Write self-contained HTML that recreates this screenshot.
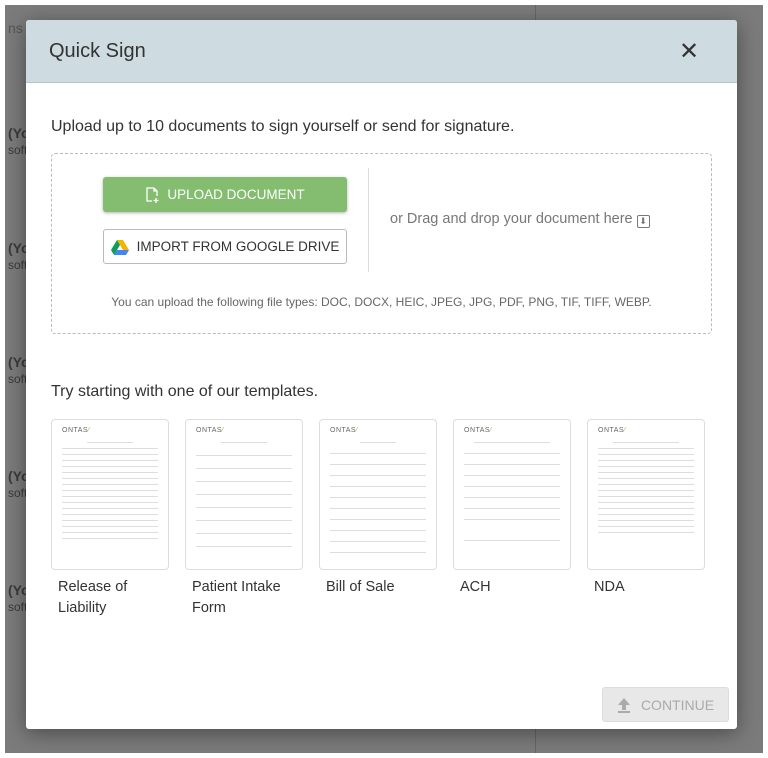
<!DOCTYPE html>
<html><head><style>
*{box-sizing:border-box;margin:0;padding:0}
body{width:768px;height:758px;background:#fff;font-family:"Liberation Sans",sans-serif;position:relative;overflow:hidden}
.bg{position:absolute;left:5px;top:5px;width:758px;height:748px;background:#7b7b7b}
.bgr{position:absolute;left:535px;top:5px;width:1px;height:748px;background:#666}
.lt{position:absolute;left:8px;color:#3a3a3a;font-size:14px}
.modal{position:absolute;left:26px;top:20px;width:711px;height:709px;background:#fff;border-radius:3px;box-shadow:0 4px 20px rgba(0,0,0,.4);overflow:hidden}
.hdr{height:63px;background:#cedbe1;border-bottom:1px solid #b5c6ce;position:relative}
.hdr h1{position:absolute;left:23px;top:20px;font-weight:normal;font-size:20px;color:#333}
.x{position:absolute;left:653px;top:17px;font-size:24px;color:#333}
.abs{position:absolute}
.dash{position:absolute;left:25px;top:133px;width:661px;height:181px;border:1px dashed #bbb;border-radius:4px}
.btn{position:absolute;left:77px;width:244px;height:35px;border-radius:3px;font-size:13.5px;display:flex;align-items:center;justify-content:center;gap:8px}
.card{position:absolute;top:399px;width:118px;height:151px;border:1px solid #ddd;border-radius:4px;background:#fff;padding:7px 10px}
.logo{font-size:7px;color:#666;letter-spacing:.5px}
.ln{height:1px;background:#ddd;margin-top:5px}
.lbl{position:absolute;top:557px;font-size:14.5px;color:#333;line-height:21px}
</style></head><body>
<div class="bg"></div><div class="bgr"></div>
<div class="lt" style="top:20px;color:#555">ns</div>
<div class="lt" style="top:125px;font-weight:bold">(Yo</div><div class="lt" style="top:143px;font-size:12px">soft</div>
<div class="lt" style="top:240px;font-weight:bold">(Yo</div><div class="lt" style="top:258px;font-size:12px">soft</div>
<div class="lt" style="top:354px;font-weight:bold">(Yo</div><div class="lt" style="top:372px;font-size:12px">soft</div>
<div class="lt" style="top:468px;font-weight:bold">(Yo</div><div class="lt" style="top:486px;font-size:12px">soft</div>
<div class="lt" style="top:582px;font-weight:bold">(Yo</div><div class="lt" style="top:600px;font-size:12px">soft</div>
<div class="modal">
<div class="hdr"><h1>Quick Sign</h1><div class="x">✕</div></div>
<div class="abs" style="left:25px;top:98px;font-size:16px;color:#333">Upload up to 10 documents to sign yourself or send for signature.</div>
<div class="dash"></div>
<div class="btn" style="top:157px;background:#84bd6f;color:#fff;box-shadow:0 1px 3px rgba(0,0,0,.3)">
<svg width="14" height="16" viewBox="0 0 14 16" fill="none" stroke="#fff" stroke-width="1.3"><path d="M9 1H2v13h5M9 1l3 3v5M9 1v3h3M11 11v5M8.5 13.5h5"/></svg>UPLOAD DOCUMENT</div>
<div class="btn" style="top:209px;border:1px solid #bbb;color:#333">
<svg width="18" height="16" viewBox="0 0 18 16"><path d="M6 1h6l6 10h-6z" fill="#f4b400"/><path d="M6 1l3 5-6 10-3-5z" fill="#0f9d58"/><path d="M3 16l3-5h12l-3 5z" fill="#4285f4"/></svg>IMPORT FROM GOOGLE DRIVE</div>
<div class="abs" style="left:342px;top:148px;width:1px;height:104px;background:#ddd"></div>
<div class="abs" style="left:364px;top:191px;font-size:14.5px;color:#777">or Drag and drop your document here <span style="display:inline-block;width:13px;height:13px;border:1.5px solid #777;border-radius:2px;font-size:9px;line-height:10px;text-align:center;vertical-align:-1px">⬇</span></div>
<div class="abs" style="left:0;width:711px;text-align:center;top:275px;font-size:12px;color:#666">You can upload the following file types: DOC, DOCX, HEIC, JPEG, JPG, PDF, PNG, TIF, TIFF, WEBP.</div>
<div class="abs" style="left:25px;top:363px;font-size:16px;color:#333">Try starting with one of our templates.</div>
<div class="card" style="left:25px"><div class="logo">ONTAS<span style="color:#8b4">⁄</span></div><div class="ln" style="margin:8px 25px 0"></div><div class="ln"></div><div class="ln"></div><div class="ln"></div><div class="ln"></div><div class="ln"></div><div class="ln"></div><div class="ln"></div><div class="ln"></div><div class="ln"></div><div class="ln"></div><div class="ln"></div><div class="ln"></div><div class="ln"></div><div class="ln"></div><div class="ln"></div><div class="ln"></div></div>
<div class="card" style="left:159px"><div class="logo">ONTAS<span style="color:#8b4">⁄</span></div><div class="ln" style="margin:8px 25px 0"></div><div class="ln" style="margin-top:12px"></div><div class="ln" style="margin-top:12px"></div><div class="ln" style="margin-top:12px"></div><div class="ln" style="margin-top:12px"></div><div class="ln" style="margin-top:12px"></div><div class="ln" style="margin-top:12px"></div><div class="ln" style="margin-top:12px"></div><div class="ln" style="margin-top:12px"></div></div>
<div class="card" style="left:293px"><div class="logo">ONTAS<span style="color:#8b4">⁄</span></div><div class="ln" style="margin:8px 30px 0"></div><div class="ln" style="margin-top:10px"></div><div class="ln" style="margin-top:10px"></div><div class="ln" style="margin-top:10px"></div><div class="ln" style="margin-top:10px"></div><div class="ln" style="margin-top:10px"></div><div class="ln" style="margin-top:10px"></div><div class="ln" style="margin-top:10px"></div><div class="ln" style="margin-top:10px"></div><div class="ln" style="margin-top:10px"></div><div class="ln" style="margin-top:10px"></div></div>
<div class="card" style="left:427px"><div class="logo">ONTAS<span style="color:#8b4">⁄</span></div><div class="ln" style="margin:8px 10px 0"></div><div class="ln" style="margin-top:10px"></div><div class="ln" style="margin-top:10px"></div><div class="ln" style="margin-top:10px"></div><div class="ln" style="margin-top:10px"></div><div class="ln" style="margin-top:10px"></div><div class="ln" style="margin-top:10px"></div><div class="ln" style="margin-top:10px"></div><div class="ln" style="margin-top:20px"></div></div>
<div class="card" style="left:561px"><div class="logo">ONTAS<span style="color:#8b4">⁄</span></div><div class="ln" style="margin:8px 15px 0"></div><div class="ln"></div><div class="ln"></div><div class="ln"></div><div class="ln"></div><div class="ln"></div><div class="ln"></div><div class="ln"></div><div class="ln"></div><div class="ln"></div><div class="ln"></div><div class="ln"></div><div class="ln"></div><div class="ln"></div><div class="ln"></div><div class="ln"></div></div>
<div class="lbl" style="left:32px">Release of<br>Liability</div>
<div class="lbl" style="left:166px">Patient Intake<br>Form</div>
<div class="lbl" style="left:300px">Bill of Sale</div>
<div class="lbl" style="left:434px">ACH</div>
<div class="lbl" style="left:568px">NDA</div>
<div class="abs" style="left:576px;top:667px;width:127px;height:35px;background:#e8e8e8;border:1px solid #ddd;border-radius:3px;display:flex;align-items:center;justify-content:center;gap:10px;color:#aaa;font-size:14px">
<svg width="14" height="16" viewBox="0 0 14 16"><path d="M7 1L1 8h4v5h4V8h4z" fill="#aaa"/><rect x="1" y="14" width="12" height="2" fill="#aaa"/></svg>CONTINUE</div>
</div>
</body></html>
